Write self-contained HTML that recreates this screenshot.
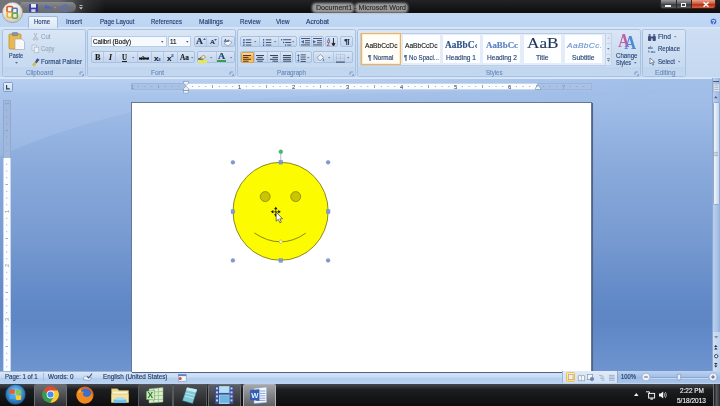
<!DOCTYPE html>
<html>
<head>
<meta charset="utf-8">
<title>Document1 - Microsoft Word</title>
<style>
html,body{margin:0;padding:0;}
body{width:720px;height:406px;overflow:hidden;position:relative;background:#000;font-family:"Liberation Sans",sans-serif;}
#root{filter:blur(.55px);position:absolute;left:0;top:0;width:720px;height:406px;}
.abs{position:absolute;box-sizing:border-box;}
.t{-webkit-text-stroke:.14px currentColor;position:absolute;white-space:nowrap;line-height:1;transform-origin:0 0;display:block;}
svg{position:absolute;overflow:visible;}
svg text{font-family:"Liberation Sans",sans-serif;}

</style>
</head>
<body>
<div id="root">
<div class="abs " style="left:-10px;top:-10px;width:740px;height:23px;background:linear-gradient(#222326,#222326 43%,#0d0d0e);"></div>
<div class="abs " style="left:-10px;top:-10px;width:115px;height:23px;background:linear-gradient(90deg,rgba(122,123,126,.95),rgba(112,113,116,.9) 60%,rgba(70,70,72,.5) 82%,rgba(30,30,32,0) 100%);"></div>
<div class="abs " style="left:-10px;top:13px;width:740px;height:14px;background:linear-gradient(#c3d9f4,#bdd5f2);"></div>
<div class="abs " style="left:-10px;top:27px;width:740px;height:51px;background:linear-gradient(#cddef3,#c4d8f0);"></div>
<div class="abs " style="left:-10px;top:78px;width:740px;height:14.5px;background:linear-gradient(#b8cff0,#adc7ec);"></div>
<div class="abs " style="left:-10px;top:92px;width:740px;height:279.5px;background:linear-gradient(#a8c3ea,#9ebbe6 6%,#8aaadb 27%,#799cd2 50%,#6088c6 76%,#5e86c5 82%,#6e95cf);"></div>
<div class="abs " style="left:-10px;top:370.5px;width:740px;height:13px;background:linear-gradient(#dbe8f8,#c4d9f2 45%,#b4ceee 55%,#bcd3f0);border-top:1px solid #9db4d4;"></div>
<div class="abs " style="left:-10px;top:383.5px;width:740px;height:33px;background:linear-gradient(#45484d,#1d1e20 17%,#0c0c0d 70%);"></div>
<div class="abs " style="left:-10px;top:76.8px;width:740px;height:1.8px;background:linear-gradient(#d2e1f4,#dde9f8);"></div>
<div class="abs " style="left:-10px;top:27px;width:740px;height:3px;background:linear-gradient(#dbe7f7,rgba(219,231,247,0));"></div>
<div class="abs " style="left:330px;top:78.6px;width:400px;height:30px;background:linear-gradient(90deg,rgba(157,187,230,0),rgba(157,187,230,.8) 80%);-webkit-mask-image:linear-gradient(#000 45%,transparent);mask-image:linear-gradient(#000 45%,transparent);"></div>
<div class="abs " style="left:21px;top:1.5px;width:54.5px;height:10.5px;background:linear-gradient(#8e9094,#74767a 50%,#6a6c70);border-radius:0 6px 6px 0;opacity:.9;"></div>
<svg style="left:2px;top:2px" width="21" height="21" viewBox="0 0 21 21"><defs><radialGradient id="ob" cx=".45" cy=".35" r=".75"><stop offset="0" stop-color="#ffffff"/><stop offset=".55" stop-color="#e8e4dc"/><stop offset="1" stop-color="#b9b5ad"/></radialGradient></defs>
<circle cx="10.5" cy="10.5" r="10.2" fill="url(#ob)" stroke="#8c8f96" stroke-width=".6"/>
<rect x="5" y="4.5" width="5.5" height="5.5" rx="1" fill="none" stroke="#d8542a" stroke-width="1.6"/>
<rect x="10.2" y="6.2" width="5" height="5" rx="1" fill="none" stroke="#4a78c0" stroke-width="1.5"/>
<rect x="5.2" y="10.2" width="5" height="5.3" rx="1" fill="none" stroke="#f0b02a" stroke-width="1.6"/>
<rect x="10.4" y="11.2" width="5" height="5" rx="1" fill="none" stroke="#6aa83a" stroke-width="1.6"/></svg>
<svg style="left:28.5px;top:3.5px" width="9" height="8" viewBox="0 0 9 8"><rect x="0" y="0" width="9" height="8" rx=".8" fill="#3c3fa0"/><rect x="2" y="0" width="5" height="3.6" fill="#e8ecff"/><rect x="2.3" y="5.2" width="4.2" height="2.8" fill="#c9cde8"/></svg>
<svg style="left:42.5px;top:4px" width="10" height="7" viewBox="0 0 10 7"><path d="M1 3.2 L4 .6 V2.2 C7.5 2 9.2 3.8 8.6 6.6 C8 4.6 6.6 4 4 4.2 V5.8 Z" fill="#4a63c8"/></svg>
<svg style="left:54.3px;top:6.7px" width="2.4" height="1.6" viewBox="0 0 2.4 1.6"><path d="M0 0H2.4L1.2 1.6Z" fill="#8f96b8"/></svg>
<svg style="left:60.5px;top:3.5px" width="8" height="8" viewBox="0 0 8 8"><path d="M6.8 2.2 A3.3 3.3 0 1 0 7.4 5.4" fill="none" stroke="#5a6fb8" stroke-width="1.5"/><path d="M5 .4 L8 2.6 L5 3.8Z" fill="#5a6fb8"/></svg>
<svg style="left:78.5px;top:4.5px" width="4" height="5" viewBox="0 0 4 5"><rect x=".5" y="0" width="3" height=".9" fill="#c8c8c8"/><path d="M0 2.2H4L2 4.4Z" fill="#c8c8c8"/></svg>
<div class="abs " style="left:312px;top:2.5px;width:42px;height:10px;background:rgba(166,166,166,.92);border-radius:4px;filter:blur(1.3px);"></div>
<div class="abs " style="left:355px;top:2.5px;width:53px;height:10px;background:rgba(166,166,166,.92);border-radius:4px;filter:blur(1.3px);"></div>
<span class="t" style="left:316px;top:4.17px;font-size:7.6px;color:#2a2a2a;transform:scaleX(0.932);">Document1 - Microsoft Word</span>
<div class="abs " style="left:660px;top:0px;width:32px;height:9px;background:linear-gradient(#9b9da1,#5b5d61 45%,#3c3d40 55%,#56585c);border:1px solid #2a2a2b;border-top:0;border-radius:0 0 0 3px;"></div>
<div class="abs " style="left:676px;top:0px;width:1px;height:8px;background:#2a2a2b;"></div>
<div class="abs " style="left:691px;top:0px;width:24.5px;height:9px;background:linear-gradient(#e5a28f,#cf5a3c 45%,#b8321a 55%,#d0603e);border:1px solid #4a1a10;border-top:0;border-radius:0 0 3px 0;"></div>
<div class="abs " style="left:665px;top:5px;width:6px;height:2px;background:#f4f4f4;"></div>
<div class="abs " style="left:681px;top:2.5px;width:5px;height:4.5px;border:1.3px solid #f4f4f4;"></div>
<svg style="left:702.5px;top:2px" width="6" height="5" viewBox="0 0 6 5"><path d="M.5 .3L5.5 4.7M5.5 .3L.5 4.7" stroke="#fff" stroke-width="1.5"/></svg>
<div class="abs " style="left:27.5px;top:15.5px;width:30px;height:12px;background:linear-gradient(#eef4fb,#dce8f6);border:1px solid #9fb9dc;border-bottom:0;border-radius:2px 2px 0 0;"></div>
<span class="t" style="left:34px;top:17.74px;font-size:7.4px;color:#1f3b6f;transform:scaleX(0.811);">Home</span>
<span class="t" style="left:66px;top:17.74px;font-size:7.4px;color:#1f3b6f;transform:scaleX(0.865);">Insert</span>
<span class="t" style="left:99.5px;top:17.74px;font-size:7.4px;color:#1f3b6f;transform:scaleX(0.830);">Page Layout</span>
<span class="t" style="left:151px;top:17.74px;font-size:7.4px;color:#1f3b6f;transform:scaleX(0.819);">References</span>
<span class="t" style="left:199px;top:17.74px;font-size:7.4px;color:#1f3b6f;transform:scaleX(0.884);">Mailings</span>
<span class="t" style="left:239.5px;top:17.74px;font-size:7.4px;color:#1f3b6f;transform:scaleX(0.845);">Review</span>
<span class="t" style="left:276px;top:17.74px;font-size:7.4px;color:#1f3b6f;transform:scaleX(0.849);">View</span>
<span class="t" style="left:306px;top:17.74px;font-size:7.4px;color:#1f3b6f;transform:scaleX(0.902);">Acrobat</span>
<svg style="left:710px;top:18px" width="7" height="7" viewBox="0 0 7 7"><circle cx="3.5" cy="3.5" r="3.3" fill="#3d6fcf" stroke="#e8f0ff" stroke-width=".6"/><text x="3.5" y="5.6" font-size="5.5" font-weight="bold" fill="#fff" text-anchor="middle">?</text></svg>
<div class="abs " style="left:2px;top:29px;width:84px;height:47.5px;border:1px solid #a9c2e2;border-radius:2.5px;background:linear-gradient(#d9e6f6,#cadcf1 60%,#c6d9f0);"></div>
<div class="abs " style="left:3px;top:66.5px;width:82px;height:9.5px;background:linear-gradient(#bfd4ee,#c4d8f0);border-radius:0 0 2px 2px;"></div>
<span class="t" style="left:26px;top:69.07px;font-size:7px;color:#6a8bb8;transform:scaleX(0.901);">Clipboard</span>
<svg style="left:80px;top:71.5px" width="4" height="4" viewBox="0 0 4 4"><path d="M0 3V0H3" fill="none" stroke="#6f8fbd" stroke-width=".8"/><path d="M1.6 3.8H3.8V1.6Z" fill="#6f8fbd"/></svg>
<div class="abs " style="left:87px;top:29px;width:149px;height:47.5px;border:1px solid #a9c2e2;border-radius:2.5px;background:linear-gradient(#d9e6f6,#cadcf1 60%,#c6d9f0);"></div>
<div class="abs " style="left:88px;top:66.5px;width:147px;height:9.5px;background:linear-gradient(#bfd4ee,#c4d8f0);border-radius:0 0 2px 2px;"></div>
<span class="t" style="left:151px;top:69.07px;font-size:7px;color:#6a8bb8;transform:scaleX(0.928);">Font</span>
<svg style="left:230px;top:71.5px" width="4" height="4" viewBox="0 0 4 4"><path d="M0 3V0H3" fill="none" stroke="#6f8fbd" stroke-width=".8"/><path d="M1.6 3.8H3.8V1.6Z" fill="#6f8fbd"/></svg>
<div class="abs " style="left:237px;top:29px;width:119px;height:47.5px;border:1px solid #a9c2e2;border-radius:2.5px;background:linear-gradient(#d9e6f6,#cadcf1 60%,#c6d9f0);"></div>
<div class="abs " style="left:238px;top:66.5px;width:117px;height:9.5px;background:linear-gradient(#bfd4ee,#c4d8f0);border-radius:0 0 2px 2px;"></div>
<span class="t" style="left:277px;top:69.07px;font-size:7px;color:#6a8bb8;transform:scaleX(0.887);">Paragraph</span>
<svg style="left:350px;top:71.5px" width="4" height="4" viewBox="0 0 4 4"><path d="M0 3V0H3" fill="none" stroke="#6f8fbd" stroke-width=".8"/><path d="M1.6 3.8H3.8V1.6Z" fill="#6f8fbd"/></svg>
<div class="abs " style="left:357px;top:29px;width:284px;height:47.5px;border:1px solid #a9c2e2;border-radius:2.5px;background:linear-gradient(#d9e6f6,#cadcf1 60%,#c6d9f0);"></div>
<div class="abs " style="left:358px;top:66.5px;width:282px;height:9.5px;background:linear-gradient(#bfd4ee,#c4d8f0);border-radius:0 0 2px 2px;"></div>
<span class="t" style="left:486px;top:69.07px;font-size:7px;color:#6a8bb8;transform:scaleX(0.866);">Styles</span>
<svg style="left:635px;top:71.5px" width="4" height="4" viewBox="0 0 4 4"><path d="M0 3V0H3" fill="none" stroke="#6f8fbd" stroke-width=".8"/><path d="M1.6 3.8H3.8V1.6Z" fill="#6f8fbd"/></svg>
<div class="abs " style="left:642px;top:29px;width:44px;height:47.5px;border:1px solid #a9c2e2;border-radius:2.5px;background:linear-gradient(#d9e6f6,#cadcf1 60%,#c6d9f0);"></div>
<div class="abs " style="left:643px;top:66.5px;width:42px;height:9.5px;background:linear-gradient(#bfd4ee,#c4d8f0);border-radius:0 0 2px 2px;"></div>
<span class="t" style="left:654.5px;top:69.07px;font-size:7px;color:#6a8bb8;transform:scaleX(0.958);">Editing</span>
<svg style="left:9px;top:32px" width="16" height="18" viewBox="0 0 16 18"><rect x="0" y="2" width="12" height="15" rx="1" fill="#e9b94e" stroke="#b8862a" stroke-width=".7"/>
<rect x="3.2" y=".6" width="5.6" height="3" rx=".8" fill="#8d97a8" stroke="#5f6b80" stroke-width=".5"/>
<path d="M6 7H13L15.5 9.5V17.5H6Z" fill="#f7f8fb" stroke="#9aa5b8" stroke-width=".6"/></svg>
<span class="t" style="left:9px;top:52.07px;font-size:7px;color:#294574;transform:scaleX(0.782);">Paste</span>
<svg style="left:14.5px;top:61.6px" width="3" height="1.8" viewBox="0 0 3 1.8"><path d="M0 0H3L1.5 1.8Z" fill="#5a6f94"/></svg>
<svg style="left:32.5px;top:33px" width="5" height="7.5" viewBox="0 0 5 7.5"><path d="M1 0L3.6 5M4 0L1.4 5" stroke="#aab4c4" stroke-width=".9" fill="none"/><circle cx="1.1" cy="6.2" r="1" fill="none" stroke="#aab4c4" stroke-width=".8"/><circle cx="3.9" cy="6.2" r="1" fill="none" stroke="#aab4c4" stroke-width=".8"/></svg>
<span class="t" style="left:41px;top:33.27px;font-size:7px;color:#9aa7ba;transform:scaleX(0.872);">Cut</span>
<svg style="left:31.5px;top:45px" width="7" height="8" viewBox="0 0 7 8"><rect x="0" y="0" width="4.5" height="5.5" fill="#e6ebf3" stroke="#aeb9ca" stroke-width=".7"/><rect x="2.3" y="2.2" width="4.5" height="5.5" fill="#eef2f8" stroke="#aeb9ca" stroke-width=".7"/></svg>
<span class="t" style="left:41px;top:45.27px;font-size:7px;color:#9aa7ba;transform:scaleX(0.826);">Copy</span>
<svg style="left:31.5px;top:57.5px" width="8" height="8" viewBox="0 0 8 8"><path d="M5.2 .3L7.6 1.8L4.4 5.2L2.8 4.2Z" fill="#3c4f8a"/><path d="M2.8 4.2L4.4 5.2L2.6 7.8Q.8 8 .6 6.6Z" fill="#e8c23a" stroke="#b8922a" stroke-width=".4"/></svg>
<span class="t" style="left:41px;top:58.07px;font-size:7px;color:#294574;transform:scaleX(0.886);">Format Painter</span>
<div class="abs " style="left:90.5px;top:36px;width:76px;height:10.8px;background:#f6f9fd;border:1px solid #b9cce6;"></div>
<span class="t" style="left:93px;top:38.07px;font-size:7px;color:#111;transform:scaleX(0.896);">Calibri (Body)</span>
<svg style="left:161.2px;top:40.949999999999996px" width="2.6" height="1.7" viewBox="0 0 2.6 1.7"><path d="M0 0H2.6L1.3 1.7Z" fill="#4a5f86"/></svg>
<div class="abs " style="left:167.5px;top:36px;width:23.5px;height:10.8px;background:#f6f9fd;border:1px solid #b9cce6;"></div>
<span class="t" style="left:169.5px;top:38.07px;font-size:7px;color:#111;transform:scaleX(0.894);">11</span>
<svg style="left:185.7px;top:40.949999999999996px" width="2.6" height="1.7" viewBox="0 0 2.6 1.7"><path d="M0 0H2.6L1.3 1.7Z" fill="#4a5f86"/></svg>
<div class="abs " style="left:194px;top:36px;width:24.5px;height:10.799999999999997px;border:1px solid #a9c0df;border-radius:2px;background:linear-gradient(#dbe7f6,#cbdcf1 50%,#c2d5ee);"></div>
<div class="abs " style="left:206px;top:37px;width:1px;height:8.799999999999997px;background:#b3c8e4;"></div>
<div class="abs " style="left:221px;top:36px;width:14px;height:10.799999999999997px;border:1px solid #a9c0df;border-radius:2px;background:linear-gradient(#dbe7f6,#cbdcf1 50%,#c2d5ee);"></div>
<span class="t" style="left:196px;top:36.96px;font-size:9px;color:#26324a;transform:scaleX(1.077);font-weight:bold;font-family:'Liberation Serif',serif;">A</span>
<svg style="left:203px;top:38px" width="3" height="2" viewBox="0 0 3 2"><path d="M0 2L1.5 0L3 2Z" fill="#3a62b0"/></svg>
<span class="t" style="left:209.5px;top:38.64px;font-size:7px;color:#26324a;transform:scaleX(0.989);font-weight:bold;font-family:'Liberation Serif',serif;">A</span>
<svg style="left:214.3px;top:38.5px" width="3" height="2" viewBox="0 0 3 2"><path d="M0 0L1.5 2L3 0Z" fill="#3a62b0"/></svg>
<svg style="left:223px;top:37.5px" width="10" height="8" viewBox="0 0 10 8"><path d="M1 5.5L5.5 2L9 4.5L5 8Z" fill="#f3f5f9" stroke="#6f7f9a" stroke-width=".6"/><text x="1" y="3.6" font-size="4" font-weight="bold" fill="#3a4a6a">Aa</text></svg>
<div class="abs " style="left:90.5px;top:51.2px;width:104.5px;height:12.099999999999994px;border:1px solid #a9c0df;border-radius:2px;background:linear-gradient(#dbe7f6,#cbdcf1 50%,#c2d5ee);"></div>
<div class="abs " style="left:102.5px;top:52.2px;width:1px;height:10.099999999999994px;background:#b3c8e4;"></div>
<div class="abs " style="left:115px;top:52.2px;width:1px;height:10.099999999999994px;background:#b3c8e4;"></div>
<div class="abs " style="left:136.5px;top:52.2px;width:1px;height:10.099999999999994px;background:#b3c8e4;"></div>
<div class="abs " style="left:150.5px;top:52.2px;width:1px;height:10.099999999999994px;background:#b3c8e4;"></div>
<div class="abs " style="left:163px;top:52.2px;width:1px;height:10.099999999999994px;background:#b3c8e4;"></div>
<div class="abs " style="left:176.5px;top:52.2px;width:1px;height:10.099999999999994px;background:#b3c8e4;"></div>
<span class="t" style="left:95px;top:54.10px;font-size:8px;color:#1a1a1a;transform:scaleX(1.031);font-weight:bold;font-family:'Liberation Serif',serif;">B</span>
<span class="t" style="left:108.5px;top:54.10px;font-size:8px;color:#1a1a1a;transform:scaleX(0.964);font-weight:bold;font-style:italic;font-family:'Liberation Serif',serif;">I</span>
<span class="t" style="left:121.5px;top:53.93px;font-size:7.6px;color:#1a1a1a;transform:scaleX(0.911);font-weight:bold;font-family:'Liberation Serif',serif;text-decoration:underline;">U</span>
<svg style="left:131.8px;top:57.2px" width="2.4" height="1.6" viewBox="0 0 2.4 1.6"><path d="M0 0H2.4L1.2 1.6Z" fill="#6a7f9f"/></svg>
<span class="t" style="left:139px;top:55.14px;font-size:6.4px;color:#1a1a1a;transform:scaleX(1.042);font-weight:bold;font-family:'Liberation Serif',serif;text-decoration:line-through;">abc</span>
<span class="t" style="left:153.5px;top:54.54px;font-size:7.4px;color:#1a1a1a;transform:scaleX(1.093);font-weight:bold;">x</span>
<span class="t" style="left:158.3px;top:58.48px;font-size:4.4px;color:#3a62b0;transform:scaleX(1.103);font-weight:bold;">2</span>
<span class="t" style="left:166.5px;top:54.54px;font-size:7.4px;color:#1a1a1a;transform:scaleX(1.093);font-weight:bold;">x</span>
<span class="t" style="left:171.3px;top:53.88px;font-size:4.4px;color:#3a62b0;transform:scaleX(1.103);font-weight:bold;">2</span>
<span class="t" style="left:180px;top:54.43px;font-size:7.6px;color:#1a1a1a;transform:scaleX(0.969);font-weight:bold;font-family:'Liberation Serif',serif;">Aa</span>
<svg style="left:190.8px;top:57.2px" width="2.4" height="1.6" viewBox="0 0 2.4 1.6"><path d="M0 0H2.4L1.2 1.6Z" fill="#6a7f9f"/></svg>
<div class="abs " style="left:196.5px;top:51.2px;width:38.5px;height:12.099999999999994px;border:1px solid #a9c0df;border-radius:2px;background:linear-gradient(#dbe7f6,#cbdcf1 50%,#c2d5ee);"></div>
<div class="abs " style="left:215.5px;top:52.2px;width:1px;height:10.099999999999994px;background:#b3c8e4;"></div>
<svg style="left:198px;top:53.5px" width="9" height="9" viewBox="0 0 9 9"><path d="M2 4.5L5.5 1L7.5 3L4 6.5Z" fill="#f6e9a0" stroke="#5a5a40" stroke-width=".5"/><text x="0" y="5.6" font-size="4" font-weight="bold" fill="#333">ab</text><rect x="0" y="6.6" width="9" height="2.2" fill="#f7ef1a"/></svg>
<svg style="left:210.3px;top:57.2px" width="2.4" height="1.6" viewBox="0 0 2.4 1.6"><path d="M0 0H2.4L1.2 1.6Z" fill="#6a7f9f"/></svg>
<span class="t" style="left:218.2px;top:52.20px;font-size:8.6px;color:#24426e;transform:scaleX(1.159);font-weight:bold;font-family:'Liberation Serif',serif;">A</span>
<div class="abs " style="left:216.8px;top:59.8px;width:9.4px;height:2.2px;background:#33a04e;"></div>
<svg style="left:229.8px;top:57.2px" width="2.4" height="1.6" viewBox="0 0 2.4 1.6"><path d="M0 0H2.4L1.2 1.6Z" fill="#6a7f9f"/></svg>
<div class="abs " style="left:240px;top:36px;width:57px;height:10.799999999999997px;border:1px solid #a9c0df;border-radius:2px;background:linear-gradient(#dbe7f6,#cbdcf1 50%,#c2d5ee);"></div>
<div class="abs " style="left:258.5px;top:37px;width:1px;height:8.799999999999997px;background:#b3c8e4;"></div>
<div class="abs " style="left:278px;top:37px;width:1px;height:8.799999999999997px;background:#b3c8e4;"></div>
<svg style="left:243px;top:38.5px" width="8.5" height="7" viewBox="0 0 8.5 7"><circle cx=".9" cy=".9" r=".9" fill="#3a62b0"/><circle cx=".9" cy="3.5" r=".9" fill="#3a62b0"/><circle cx=".9" cy="6.1" r=".9" fill="#3a62b0"/><rect x="2.8" y=".4" width="5.5" height=".9" fill="#3a4660"/><rect x="2.8" y="3" width="5.5" height=".9" fill="#3a4660"/><rect x="2.8" y="5.6" width="5.5" height=".9" fill="#3a4660"/></svg>
<svg style="left:253.8px;top:41.0px" width="2.4" height="1.6" viewBox="0 0 2.4 1.6"><path d="M0 0H2.4L1.2 1.6Z" fill="#6a7f9f"/></svg>
<svg style="left:262.5px;top:38.5px" width="8.5" height="7" viewBox="0 0 8.5 7"><rect x="0" y="0" width="1.2" height="1.6" fill="#3a62b0"/><rect x="0" y="2.7" width="1.2" height="1.6" fill="#3a62b0"/><rect x="0" y="5.4" width="1.2" height="1.6" fill="#3a62b0"/><rect x="2.8" y=".4" width="5.5" height=".9" fill="#3a4660"/><rect x="2.8" y="3" width="5.5" height=".9" fill="#3a4660"/><rect x="2.8" y="5.6" width="5.5" height=".9" fill="#3a4660"/></svg>
<svg style="left:273.8px;top:41.0px" width="2.4" height="1.6" viewBox="0 0 2.4 1.6"><path d="M0 0H2.4L1.2 1.6Z" fill="#6a7f9f"/></svg>
<svg style="left:280.5px;top:38.5px" width="10.5" height="7" viewBox="0 0 10.5 7"><rect x="0" y="0" width="1.2" height="1.4" fill="#3a62b0"/><rect x="2" y="2.7" width="1.2" height="1.4" fill="#3a62b0"/><rect x="4" y="5.4" width="1.2" height="1.4" fill="#3a62b0"/><rect x="2.2" y=".3" width="8" height=".9" fill="#3a4660"/><rect x="4.2" y="3" width="6" height=".9" fill="#3a4660"/><rect x="6.2" y="5.6" width="4" height=".9" fill="#3a4660"/></svg>
<svg style="left:292.3px;top:41.0px" width="2.4" height="1.6" viewBox="0 0 2.4 1.6"><path d="M0 0H2.4L1.2 1.6Z" fill="#6a7f9f"/></svg>
<div class="abs " style="left:298.5px;top:36px;width:25.0px;height:10.799999999999997px;border:1px solid #a9c0df;border-radius:2px;background:linear-gradient(#dbe7f6,#cbdcf1 50%,#c2d5ee);"></div>
<div class="abs " style="left:310.5px;top:37px;width:1px;height:8.799999999999997px;background:#b3c8e4;"></div>
<svg style="left:300.5px;top:38.3px" width="9" height="7.4" viewBox="0 0 9 7.4"><rect x="0" y="0" width="9" height=".9" fill="#3a4660"/><rect x="4" y="2.2" width="5" height=".9" fill="#3a4660"/><rect x="4" y="4.4" width="5" height=".9" fill="#3a4660"/><rect x="0" y="6.5" width="9" height=".9" fill="#3a4660"/><path d="M3 2L0 3.7L3 5.4Z" fill="#3a62b0"/></svg>
<svg style="left:313px;top:38.3px" width="9" height="7.4" viewBox="0 0 9 7.4"><rect x="0" y="0" width="9" height=".9" fill="#3a4660"/><rect x="4" y="2.2" width="5" height=".9" fill="#3a4660"/><rect x="4" y="4.4" width="5" height=".9" fill="#3a4660"/><rect x="0" y="6.5" width="9" height=".9" fill="#3a4660"/><path d="M0 2L3 3.7L0 5.4Z" fill="#3a62b0"/></svg>
<div class="abs " style="left:325px;top:36px;width:13px;height:10.799999999999997px;border:1px solid #a9c0df;border-radius:2px;background:linear-gradient(#dbe7f6,#cbdcf1 50%,#c2d5ee);"></div>
<svg style="left:327px;top:37.8px" width="9" height="8.4" viewBox="0 0 9 8.4"><text x="0" y="3.8" font-size="4.6" font-weight="bold" fill="#3a62b0">A</text><text x="0" y="8.2" font-size="4.6" font-weight="bold" fill="#b0303a">Z</text><path d="M6.5 0V7M5 5.4L6.5 8L8 5.4Z" stroke="#222" stroke-width=".9" fill="#222"/></svg>
<div class="abs " style="left:339.5px;top:36px;width:13.0px;height:10.799999999999997px;border:1px solid #a9c0df;border-radius:2px;background:linear-gradient(#dbe7f6,#cbdcf1 50%,#c2d5ee);"></div>
<span class="t" style="left:344px;top:38.37px;font-size:7.6px;color:#26324a;transform:scaleX(1.419);font-weight:bold;">¶</span>
<div class="abs " style="left:240px;top:51.2px;width:53px;height:12.099999999999994px;border:1px solid #a9c0df;border-radius:2px;background:linear-gradient(#dbe7f6,#cbdcf1 50%,#c2d5ee);"></div>
<div class="abs " style="left:253.5px;top:52.2px;width:1px;height:10.099999999999994px;background:#b3c8e4;"></div>
<div class="abs " style="left:266.5px;top:52.2px;width:1px;height:10.099999999999994px;background:#b3c8e4;"></div>
<div class="abs " style="left:279.5px;top:52.2px;width:1px;height:10.099999999999994px;background:#b3c8e4;"></div>
<div class="abs " style="left:240.5px;top:51.7px;width:13px;height:11.1px;background:linear-gradient(#fbd9a0,#f5b04c 50%,#f7c66f);border:1px solid #d8a050;border-radius:2px 0 0 2px;"></div>
<svg style="left:243px;top:54.8px" width="8" height="7.6" viewBox="0 0 8 7.6"><rect x="0" y="0.0" width="8" height="1" fill="#4a3a20"/><rect x="0" y="1.9" width="5.5" height="1" fill="#4a3a20"/><rect x="0" y="3.8" width="8" height="1" fill="#4a3a20"/><rect x="0" y="5.699999999999999" width="5.5" height="1" fill="#4a3a20"/></svg>
<svg style="left:256px;top:54.8px" width="8" height="7.6" viewBox="0 0 8 7.6"><rect x="0.0" y="0.0" width="8" height="1" fill="#3a4660"/><rect x="1.25" y="1.9" width="5.5" height="1" fill="#3a4660"/><rect x="0.0" y="3.8" width="8" height="1" fill="#3a4660"/><rect x="1.25" y="5.699999999999999" width="5.5" height="1" fill="#3a4660"/></svg>
<svg style="left:269.5px;top:54.8px" width="8" height="7.6" viewBox="0 0 8 7.6"><rect x="0" y="0.0" width="8" height="1" fill="#3a4660"/><rect x="2.5" y="1.9" width="5.5" height="1" fill="#3a4660"/><rect x="0" y="3.8" width="8" height="1" fill="#3a4660"/><rect x="2.5" y="5.699999999999999" width="5.5" height="1" fill="#3a4660"/></svg>
<svg style="left:282.5px;top:54.8px" width="8" height="7.6" viewBox="0 0 8 7.6"><rect x="0" y="0.0" width="8" height="1" fill="#3a4660"/><rect x="0" y="1.9" width="8" height="1" fill="#3a4660"/><rect x="0" y="3.8" width="8" height="1" fill="#3a4660"/><rect x="0" y="5.699999999999999" width="8" height="1" fill="#3a4660"/></svg>
<div class="abs " style="left:294.5px;top:51.2px;width:17.0px;height:12.099999999999994px;border:1px solid #a9c0df;border-radius:2px;background:linear-gradient(#dbe7f6,#cbdcf1 50%,#c2d5ee);"></div>
<svg style="left:296.5px;top:54px" width="9" height="8" viewBox="0 0 9 8"><path d="M1.3 0L0 2H2.6ZM1.3 8L0 6H2.6Z" fill="#3a62b0"/><rect x="1" y="1.5" width=".7" height="5" fill="#3a62b0"/><rect x="3.6" y=".4" width="5.2" height=".9" fill="#3a4660"/><rect x="3.6" y="2.6" width="5.2" height=".9" fill="#3a4660"/><rect x="3.6" y="4.8" width="5.2" height=".9" fill="#3a4660"/><rect x="3.6" y="7" width="5.2" height=".9" fill="#3a4660"/></svg>
<svg style="left:306.8px;top:57.2px" width="2.4" height="1.6" viewBox="0 0 2.4 1.6"><path d="M0 0H2.4L1.2 1.6Z" fill="#6a7f9f"/></svg>
<div class="abs " style="left:313px;top:51.2px;width:39.5px;height:12.099999999999994px;border:1px solid #a9c0df;border-radius:2px;background:linear-gradient(#dbe7f6,#cbdcf1 50%,#c2d5ee);"></div>
<div class="abs " style="left:332.5px;top:52.2px;width:1px;height:10.099999999999994px;background:#b3c8e4;"></div>
<svg style="left:316px;top:54px" width="9" height="8" viewBox="0 0 9 8"><path d="M1 3.5L4.5 .5L7.5 3.5L4 7Z" fill="#eef1f6" stroke="#6a7588" stroke-width=".6"/><path d="M7.2 4.2Q9 6.5 7.8 7.4Q6.6 6.5 7.2 4.2Z" fill="#3a62b0"/><rect x="0" y="7" width="6" height="1" fill="#dfe4ec"/></svg>
<svg style="left:328.3px;top:57.2px" width="2.4" height="1.6" viewBox="0 0 2.4 1.6"><path d="M0 0H2.4L1.2 1.6Z" fill="#6a7f9f"/></svg>
<svg style="left:335.5px;top:54px" width="9" height="8.5" viewBox="0 0 9 8.5"><rect x=".4" y=".4" width="8" height="7.6" fill="none" stroke="#98a6bd" stroke-width=".7" stroke-dasharray="1 .8"/><path d="M4.4 .4V8M.4 4.2H8.4" stroke="#98a6bd" stroke-width=".6" stroke-dasharray="1 .8"/><rect x="0" y="7.6" width="8.8" height="1" fill="#3a4660"/></svg>
<svg style="left:346.8px;top:57.2px" width="2.4" height="1.6" viewBox="0 0 2.4 1.6"><path d="M0 0H2.4L1.2 1.6Z" fill="#6a7f9f"/></svg>
<div class="abs " style="left:360px;top:32.5px;width:251.5px;height:33px;background:#e3ecf8;border:1px solid #bccee7;"></div>
<div class="abs " style="left:361px;top:33px;width:39.5px;height:31.5px;background:#fffdf6;border:1.2px solid #f0b35a;box-shadow:inset 0 0 0 .8px #fde9c0;"></div>
<div class="abs " style="left:402.5px;top:35px;width:37.0px;height:27.5px;background:#fdfeff;"></div>
<div class="abs " style="left:442.5px;top:35px;width:37.5px;height:27.5px;background:#fdfeff;"></div>
<div class="abs " style="left:482.5px;top:35px;width:37.5px;height:27.5px;background:#fdfeff;"></div>
<div class="abs " style="left:523.5px;top:35px;width:37.0px;height:27.5px;background:#fdfeff;"></div>
<div class="abs " style="left:564.5px;top:35px;width:37.0px;height:27.5px;background:#fdfeff;"></div>
<span class="t" style="left:364.5px;top:41.74px;font-size:7.4px;color:#1a1a1a;transform:scaleX(0.898);">AaBbCcDc</span>
<span class="t" style="left:405px;top:41.74px;font-size:7.4px;color:#1a1a1a;transform:scaleX(0.898);">AaBbCcDc</span>
<span class="t" style="left:445px;top:40.23px;font-size:10px;color:#2f4f86;transform:scaleX(0.928);font-weight:bold;font-family:'Liberation Serif',serif;">AaBbC‹</span>
<span class="t" style="left:486px;top:40.86px;font-size:9px;color:#5b7fc0;transform:scaleX(0.985);font-weight:bold;font-family:'Liberation Serif',serif;">AaBbCc</span>
<span class="t" style="left:527px;top:34.90px;font-size:15.4px;color:#1e3358;transform:scaleX(1.116);font-family:'Liberation Serif',serif;">AaB</span>
<span class="t" style="left:567px;top:41.74px;font-size:7.4px;color:#6e95cf;transform:scaleX(1.130);font-style:italic;letter-spacing:.3px;">AaBbCc.</span>
<span class="t" style="left:367.5px;top:54.64px;font-size:6.8px;color:#294574;transform:scaleX(0.929);">¶ Normal</span>
<span class="t" style="left:404px;top:54.64px;font-size:6.8px;color:#294574;transform:scaleX(0.902);">¶ No Spaci...</span>
<span class="t" style="left:446px;top:54.64px;font-size:6.8px;color:#294574;transform:scaleX(0.968);">Heading 1</span>
<span class="t" style="left:487px;top:54.64px;font-size:6.8px;color:#294574;transform:scaleX(0.968);">Heading 2</span>
<span class="t" style="left:536px;top:54.64px;font-size:6.8px;color:#294574;transform:scaleX(0.993);">Title</span>
<span class="t" style="left:572px;top:54.64px;font-size:6.8px;color:#294574;transform:scaleX(0.992);">Subtitle</span>
<div class="abs " style="left:604.5px;top:32.5px;width:7px;height:33px;background:linear-gradient(90deg,#e3ecf8,#d6e3f4);border:1px solid #c3d3ea;"></div>
<div class="abs " style="left:605px;top:43px;width:6px;height:1px;background:#c6d5eb;"></div>
<div class="abs " style="left:605px;top:54px;width:6px;height:1px;background:#c6d5eb;"></div>
<svg style="left:606.7px;top:36.8px" width="2.6" height="1.8" viewBox="0 0 2.6 1.8"><path d="M0 1.8L1.3 0L2.6 1.8Z" fill="#b7c4d8"/></svg>
<svg style="left:606.7px;top:47.6px" width="2.6" height="1.8" viewBox="0 0 2.6 1.8"><path d="M0 0H2.6L1.3 1.8Z" fill="#6a7f9f"/></svg>
<svg style="left:606.5px;top:57.5px" width="3" height="4" viewBox="0 0 3 4"><rect x="0" y="0" width="3" height=".8" fill="#6a7f9f"/><path d="M0 1.8H3L1.5 3.8Z" fill="#6a7f9f"/></svg>
<svg style="left:617px;top:32px" width="20" height="18" viewBox="0 0 20 18"><text x="1.2" y="15" font-size="18" font-weight="bold" fill="#c45aa6" style="font-family:'Liberation Serif',serif" textLength="11" lengthAdjust="spacingAndGlyphs">A</text><text x="7.4" y="17" font-size="18" font-weight="bold" fill="#4d8ad4" style="font-family:'Liberation Serif',serif" textLength="11.6" lengthAdjust="spacingAndGlyphs">A</text></svg>
<span class="t" style="left:616px;top:52.07px;font-size:7px;color:#294574;transform:scaleX(0.877);">Change</span>
<span class="t" style="left:616px;top:59.07px;font-size:7px;color:#294574;transform:scaleX(0.787);">Styles</span>
<svg style="left:633.7px;top:61.65px" width="2.6" height="1.7" viewBox="0 0 2.6 1.7"><path d="M0 0H2.6L1.3 1.7Z" fill="#5a6f94"/></svg>
<svg style="left:647.5px;top:33.5px" width="8" height="7" viewBox="0 0 8 7"><rect x="0" y="2" width="3.2" height="5" rx=".8" fill="#3f4f7a"/><rect x="4.6" y="2" width="3.2" height="5" rx=".8" fill="#3f4f7a"/><rect x="2.4" y="2.6" width="3" height="1.8" fill="#3f4f7a"/><rect x=".6" y="0" width="2" height="2.4" fill="#5f74a8"/><rect x="5.2" y="0" width="2" height="2.4" fill="#5f74a8"/></svg>
<span class="t" style="left:658px;top:33.27px;font-size:7px;color:#294574;transform:scaleX(0.955);">Find</span>
<svg style="left:674.3px;top:36.0px" width="2.4" height="1.6" viewBox="0 0 2.4 1.6"><path d="M0 0H2.4L1.2 1.6Z" fill="#6a7f9f"/></svg>
<svg style="left:647.5px;top:46px" width="8" height="7" viewBox="0 0 8 7"><text x="0" y="3.4" font-size="4" font-weight="bold" fill="#3a4660">ab</text><text x="3" y="7" font-size="4" font-weight="bold" fill="#3a62b0">ac</text><path d="M.5 4.4V6H2.4" fill="none" stroke="#3a62b0" stroke-width=".6"/></svg>
<span class="t" style="left:658px;top:45.27px;font-size:7px;color:#294574;transform:scaleX(0.857);">Replace</span>
<svg style="left:649px;top:58px" width="6" height="7.5" viewBox="0 0 6 7.5"><path d="M1 0V6L2.6 4.6L3.8 7.2L4.8 6.8L3.6 4.2H5.6Z" fill="#fff" stroke="#3a4660" stroke-width=".6"/></svg>
<span class="t" style="left:658px;top:58.07px;font-size:7px;color:#294574;transform:scaleX(0.874);">Select</span>
<svg style="left:678.3px;top:60.7px" width="2.4" height="1.6" viewBox="0 0 2.4 1.6"><path d="M0 0H2.4L1.2 1.6Z" fill="#6a7f9f"/></svg>
<div class="abs " style="left:3px;top:82px;width:9.5px;height:9.5px;background:linear-gradient(#e6eefa,#c9dbf2);border:1px solid #7f9cc6;border-radius:1.5px;"></div>
<svg style="left:6px;top:84.5px" width="4" height="4.5" viewBox="0 0 4 4.5"><path d="M.6 0V3.9H3.8" fill="none" stroke="#2a3a5a" stroke-width="1.1"/></svg>
<div class="abs " style="left:131px;top:83px;width:460.5px;height:7px;background:#a9c1e5;border:1px solid #9cb5db;"></div>
<div class="abs " style="left:186px;top:83px;width:351px;height:7px;background:#fbfcfe;border-top:1px solid #c8d6ea;border-bottom:1px solid #c8d6ea;"></div>
<svg style="left:0px;top:0px" width="720" height="100" viewBox="0 0 720 100"><rect x="137.90" y="86" width=".8" height="1" fill="#7f99c2"/><rect x="144.65" y="86" width=".8" height="1" fill="#7f99c2"/><rect x="151.40" y="86" width=".8" height="1" fill="#7f99c2"/><rect x="158.15" y="85" width=".8" height="3" fill="#7f99c2"/><rect x="164.90" y="86" width=".8" height="1" fill="#7f99c2"/><rect x="171.65" y="86" width=".8" height="1" fill="#7f99c2"/><rect x="178.40" y="86" width=".8" height="1" fill="#7f99c2"/><rect x="191.90" y="86" width=".8" height="1" fill="#7d8fae"/><rect x="198.65" y="86" width=".8" height="1" fill="#7d8fae"/><rect x="205.40" y="86" width=".8" height="1" fill="#7d8fae"/><rect x="212.15" y="85" width=".8" height="3" fill="#7d8fae"/><rect x="218.90" y="86" width=".8" height="1" fill="#7d8fae"/><rect x="225.65" y="86" width=".8" height="1" fill="#7d8fae"/><rect x="232.40" y="86" width=".8" height="1" fill="#7d8fae"/><rect x="245.90" y="86" width=".8" height="1" fill="#7d8fae"/><rect x="252.65" y="86" width=".8" height="1" fill="#7d8fae"/><rect x="259.40" y="86" width=".8" height="1" fill="#7d8fae"/><rect x="266.15" y="85" width=".8" height="3" fill="#7d8fae"/><rect x="272.90" y="86" width=".8" height="1" fill="#7d8fae"/><rect x="279.65" y="86" width=".8" height="1" fill="#7d8fae"/><rect x="286.40" y="86" width=".8" height="1" fill="#7d8fae"/><rect x="299.90" y="86" width=".8" height="1" fill="#7d8fae"/><rect x="306.65" y="86" width=".8" height="1" fill="#7d8fae"/><rect x="313.40" y="86" width=".8" height="1" fill="#7d8fae"/><rect x="320.15" y="85" width=".8" height="3" fill="#7d8fae"/><rect x="326.90" y="86" width=".8" height="1" fill="#7d8fae"/><rect x="333.65" y="86" width=".8" height="1" fill="#7d8fae"/><rect x="340.40" y="86" width=".8" height="1" fill="#7d8fae"/><rect x="353.90" y="86" width=".8" height="1" fill="#7d8fae"/><rect x="360.65" y="86" width=".8" height="1" fill="#7d8fae"/><rect x="367.40" y="86" width=".8" height="1" fill="#7d8fae"/><rect x="374.15" y="85" width=".8" height="3" fill="#7d8fae"/><rect x="380.90" y="86" width=".8" height="1" fill="#7d8fae"/><rect x="387.65" y="86" width=".8" height="1" fill="#7d8fae"/><rect x="394.40" y="86" width=".8" height="1" fill="#7d8fae"/><rect x="407.90" y="86" width=".8" height="1" fill="#7d8fae"/><rect x="414.65" y="86" width=".8" height="1" fill="#7d8fae"/><rect x="421.40" y="86" width=".8" height="1" fill="#7d8fae"/><rect x="428.15" y="85" width=".8" height="3" fill="#7d8fae"/><rect x="434.90" y="86" width=".8" height="1" fill="#7d8fae"/><rect x="441.65" y="86" width=".8" height="1" fill="#7d8fae"/><rect x="448.40" y="86" width=".8" height="1" fill="#7d8fae"/><rect x="461.90" y="86" width=".8" height="1" fill="#7d8fae"/><rect x="468.65" y="86" width=".8" height="1" fill="#7d8fae"/><rect x="475.40" y="86" width=".8" height="1" fill="#7d8fae"/><rect x="482.15" y="85" width=".8" height="3" fill="#7d8fae"/><rect x="488.90" y="86" width=".8" height="1" fill="#7d8fae"/><rect x="495.65" y="86" width=".8" height="1" fill="#7d8fae"/><rect x="502.40" y="86" width=".8" height="1" fill="#7d8fae"/><rect x="515.90" y="86" width=".8" height="1" fill="#7d8fae"/><rect x="522.65" y="86" width=".8" height="1" fill="#7d8fae"/><rect x="529.40" y="86" width=".8" height="1" fill="#7d8fae"/><rect x="536.15" y="85" width=".8" height="3" fill="#7d8fae"/><rect x="542.90" y="86" width=".8" height="1" fill="#7f99c2"/><rect x="549.65" y="86" width=".8" height="1" fill="#7f99c2"/><rect x="556.40" y="86" width=".8" height="1" fill="#7f99c2"/><rect x="569.90" y="86" width=".8" height="1" fill="#7f99c2"/><rect x="576.65" y="86" width=".8" height="1" fill="#7f99c2"/><rect x="583.40" y="86" width=".8" height="1" fill="#7f99c2"/></svg>
<span class="t" style="left:237.9px;top:83.72px;font-size:6px;color:#4f607f;transform:scaleX(0.959);">1</span>
<span class="t" style="left:291.9px;top:83.72px;font-size:6px;color:#4f607f;transform:scaleX(0.959);">2</span>
<span class="t" style="left:345.9px;top:83.72px;font-size:6px;color:#4f607f;transform:scaleX(0.959);">3</span>
<span class="t" style="left:399.9px;top:83.72px;font-size:6px;color:#4f607f;transform:scaleX(0.959);">4</span>
<span class="t" style="left:453.9px;top:83.72px;font-size:6px;color:#4f607f;transform:scaleX(0.959);">5</span>
<span class="t" style="left:507.9px;top:83.72px;font-size:6px;color:#4f607f;transform:scaleX(0.959);">6</span>
<span class="t" style="left:131.4px;top:83.72px;font-size:6px;color:#7f99c2;transform:scaleX(0.959);">1</span>
<span class="t" style="left:561.9px;top:83.72px;font-size:6px;color:#7f99c2;transform:scaleX(0.959);">7</span>
<svg style="left:182.5px;top:80.5px" width="6" height="13" viewBox="0 0 6 13"><path d="M.4 .4H5.6V2L3 4.6L.4 2Z" fill="#eef3fb" stroke="#6f86ab" stroke-width=".6"/><path d="M3 5.2L5.6 7.8V9.4H.4V7.8Z" fill="#eef3fb" stroke="#6f86ab" stroke-width=".6"/><rect x=".4" y="9.6" width="5.2" height="2.8" fill="#eef3fb" stroke="#6f86ab" stroke-width=".6"/></svg>
<svg style="left:534.5px;top:85px" width="6" height="5" viewBox="0 0 6 5"><path d="M3 .4L5.6 3V4.6H.4V3Z" fill="#eef3fb" stroke="#6f86ab" stroke-width=".6"/></svg>
<svg style="left:0px;top:92px" width="720" height="278" viewBox="0 0 720 278"><defs><linearGradient id="sw" x1="0" y1="0" x2="0" y2="1"><stop offset="0" stop-color="#adc7ec" stop-opacity=".6"/><stop offset=".3" stop-color="#a8c3ea" stop-opacity=".75"/><stop offset="1" stop-color="#a4c0e8" stop-opacity=".5"/></linearGradient></defs>
<path d="M0 0H420Q230 4 132 20Q56 38 0 64Z" fill="url(#sw)" opacity=".9"/></svg>
<div class="abs " style="left:3px;top:100px;width:7.5px;height:271px;background:#9fb8dc;border:1px solid #8fa9cf;border-bottom:0;"></div>
<div class="abs " style="left:3px;top:157.5px;width:7.5px;height:213.5px;background:#fbfcfe;border-left:1px solid #c8d6ea;border-right:1px solid #c8d6ea;"></div>
<svg style="left:0px;top:0px" width="20" height="406" viewBox="0 0 20 406"><text x="0" y="0" transform="translate(8.6 105.10) rotate(-90)" font-size="5.6" fill="#7f99c2">1</text><rect x="6.2" y="109.85" width="1" height=".8" fill="#7f99c2"/><rect x="6.2" y="116.60" width="1" height=".8" fill="#7f99c2"/><rect x="6.2" y="123.35" width="1" height=".8" fill="#7f99c2"/><rect x="5.5" y="130.10" width="2.4" height=".8" fill="#7f99c2"/><rect x="6.2" y="136.85" width="1" height=".8" fill="#7f99c2"/><rect x="6.2" y="143.60" width="1" height=".8" fill="#7f99c2"/><rect x="6.2" y="150.35" width="1" height=".8" fill="#7f99c2"/><rect x="6.2" y="163.85" width="1" height=".8" fill="#7d8fae"/><rect x="6.2" y="170.60" width="1" height=".8" fill="#7d8fae"/><rect x="6.2" y="177.35" width="1" height=".8" fill="#7d8fae"/><rect x="5.5" y="184.10" width="2.4" height=".8" fill="#7d8fae"/><rect x="6.2" y="190.85" width="1" height=".8" fill="#7d8fae"/><rect x="6.2" y="197.60" width="1" height=".8" fill="#7d8fae"/><rect x="6.2" y="204.35" width="1" height=".8" fill="#7d8fae"/><text x="0" y="0" transform="translate(8.6 213.10) rotate(-90)" font-size="5.6" fill="#7d8fae">1</text><rect x="6.2" y="217.85" width="1" height=".8" fill="#7d8fae"/><rect x="6.2" y="224.60" width="1" height=".8" fill="#7d8fae"/><rect x="6.2" y="231.35" width="1" height=".8" fill="#7d8fae"/><rect x="5.5" y="238.10" width="2.4" height=".8" fill="#7d8fae"/><rect x="6.2" y="244.85" width="1" height=".8" fill="#7d8fae"/><rect x="6.2" y="251.60" width="1" height=".8" fill="#7d8fae"/><rect x="6.2" y="258.35" width="1" height=".8" fill="#7d8fae"/><text x="0" y="0" transform="translate(8.6 267.10) rotate(-90)" font-size="5.6" fill="#7d8fae">2</text><rect x="6.2" y="271.85" width="1" height=".8" fill="#7d8fae"/><rect x="6.2" y="278.60" width="1" height=".8" fill="#7d8fae"/><rect x="6.2" y="285.35" width="1" height=".8" fill="#7d8fae"/><rect x="5.5" y="292.10" width="2.4" height=".8" fill="#7d8fae"/><rect x="6.2" y="298.85" width="1" height=".8" fill="#7d8fae"/><rect x="6.2" y="305.60" width="1" height=".8" fill="#7d8fae"/><rect x="6.2" y="312.35" width="1" height=".8" fill="#7d8fae"/><text x="0" y="0" transform="translate(8.6 321.10) rotate(-90)" font-size="5.6" fill="#7d8fae">3</text><rect x="6.2" y="325.85" width="1" height=".8" fill="#7d8fae"/><rect x="6.2" y="332.60" width="1" height=".8" fill="#7d8fae"/><rect x="6.2" y="339.35" width="1" height=".8" fill="#7d8fae"/><rect x="5.5" y="346.10" width="2.4" height=".8" fill="#7d8fae"/><rect x="6.2" y="352.85" width="1" height=".8" fill="#7d8fae"/><rect x="6.2" y="359.60" width="1" height=".8" fill="#7d8fae"/><rect x="6.2" y="366.35" width="1" height=".8" fill="#7d8fae"/></svg>
<div class="abs " style="left:131px;top:101.6px;width:460.8px;height:270px;background:#fff;border:.8px solid #66789a;border-bottom:0;box-shadow:.9px .6px .6px #50648a;"></div>
<div class="abs " style="left:711.5px;top:78px;width:8.5px;height:293px;background:linear-gradient(90deg,#b9cfee,#a9c3e8 60%,#94b0da);border-left:1px solid #8ea9d0;"></div>
<div class="abs " style="left:713px;top:80.5px;width:6px;height:1.2px;background:#4b5f86;"></div>
<svg style="left:712.5px;top:83px" width="7" height="9" viewBox="0 0 7 9"><rect x=".3" y=".3" width="6.4" height="8.4" rx="1" fill="#dfe8f5" stroke="#8a9fc2" stroke-width=".6"/><path d="M1.5 2H5.5M1.5 4.2H5.5M1.5 6.4H5.5" stroke="#8795ad" stroke-width=".7"/></svg>
<svg style="left:714px;top:96.3px" width="3.6" height="2.2" viewBox="0 0 3.6 2.2"><path d="M0 2.2L1.8 0L3.6 2.2Z" fill="#4b5f86"/></svg>
<div class="abs " style="left:712.5px;top:102px;width:7px;height:103px;background:linear-gradient(90deg,#f3f7fc,#dbe6f5 50%,#c3d4ec);border:1px solid #8fa9cf;border-radius:1.5px;"></div>
<svg style="left:714px;top:151.5px" width="4" height="4" viewBox="0 0 4 4"><path d="M0 .4H4M0 2H4M0 3.6H4" stroke="#7f95b8" stroke-width=".6"/></svg>
<div class="abs " style="left:712.5px;top:332px;width:7px;height:39px;background:linear-gradient(90deg,#d2e1f4,#bdd2ee);"></div>
<svg style="left:713.6px;top:335.8px" width="4.4" height="2.6" viewBox="0 0 4.4 2.6"><path d="M0 0H4.4L2.2 2.6Z" fill="#7e8fb0"/></svg>
<svg style="left:714px;top:344.5px" width="3.6" height="4.4" viewBox="0 0 3.6 4.4"><path d="M0 2L1.8 0L3.6 2ZM0 4.4L1.8 2.4L3.6 4.4Z" fill="#26324a"/></svg>
<svg style="left:713.8px;top:353.8px" width="4.4" height="4.4" viewBox="0 0 4.4 4.4"><circle cx="2.2" cy="2.2" r="1.7" fill="#e9eef6" stroke="#26324a" stroke-width=".9"/></svg>
<svg style="left:714px;top:362.8px" width="3.6" height="4.4" viewBox="0 0 3.6 4.4"><path d="M0 0L1.8 2L3.6 0ZM0 2.4L1.8 4.4L3.6 2.4Z" fill="#26324a"/></svg>
<svg style="left:220px;top:140px" width="120" height="130" viewBox="0 0 120 130"><ellipse cx="60.6" cy="71.3" rx="47.6" ry="49" fill="#fdfb00" stroke="#6f6a1a" stroke-width=".8"/>
<circle cx="45.2" cy="56.6" r="5" fill="#cbc500" stroke="#7d7814" stroke-width=".7"/>
<circle cx="75.7" cy="56.6" r="5" fill="#cbc500" stroke="#7d7814" stroke-width=".7"/>
<path d="M34.4 93 Q60.6 110.6 85.8 93.2" fill="none" stroke="#6f6a1a" stroke-width=".8"/>
<path d="M60.8 22.3V12" stroke="#9fb0d6" stroke-width=".9"/>
<circle cx="60.8" cy="11.7" r="1.9" fill="#3fc06a" stroke="#2c9a50" stroke-width=".4"/>
<g fill="#7f9bd0" stroke="#5f7fbf" stroke-width=".4">
<circle cx="12.9" cy="22.3" r="1.9"/><circle cx="108.1" cy="22.3" r="1.9"/><circle cx="12.9" cy="120.4" r="1.9"/><circle cx="108.1" cy="120.4" r="1.9"/>
<rect x="59" y="20.5" width="3.6" height="3.6"/><rect x="59" y="118.7" width="3.6" height="3.6"/><rect x="11.1" y="69.8" width="3.6" height="3.6"/><rect x="106.4" y="69.8" width="3.6" height="3.6"/>
</g>
<path d="M60.8 99.7L62.8 101.7L60.8 103.7L58.8 101.7Z" fill="#fffde0" stroke="#8a8420" stroke-width=".5"/>
<g stroke="#1a1a1a" stroke-width=".7" fill="#1a1a1a"><path d="M52.4 71.8H59.2M55.8 68.4V75.2" fill="none"/><path d="M55.8 66.8L54 69.3H57.6ZM55.8 76.8L54 74.3H57.6ZM50.8 71.8L53.3 70V73.6ZM60.8 71.8L58.3 70V73.6Z" stroke="none"/></g>
<path d="M56.2 72.2V81.2L58.3 79.3L59.9 82.8L61.3 82.2L59.8 78.8H62.6Z" fill="#fff" stroke="#222" stroke-width=".6"/></svg>
<span class="t" style="left:4.7px;top:374.01px;font-size:6.6px;color:#223a66;transform:scaleX(0.921);">Page: 1 of 1</span>
<div class="abs " style="left:42.5px;top:373px;width:1px;height:8px;background:#a3bbdc;"></div>
<span class="t" style="left:48.3px;top:374.01px;font-size:6.6px;color:#223a66;transform:scaleX(0.970);">Words: 0</span>
<svg style="left:83px;top:372.5px" width="10" height="8.5" viewBox="0 0 10 8.5"><path d="M.5 4.5L3 3L9 4.8L6 7.6L.5 6.6Z" fill="#f1f4f9" stroke="#7a8aa6" stroke-width=".6"/><path d="M4 3.4L5.6 5L9 .6" fill="none" stroke="#3c5a94" stroke-width="1.1"/></svg>
<span class="t" style="left:102.5px;top:374.01px;font-size:6.6px;color:#223a66;transform:scaleX(0.956);">English (United States)</span>
<svg style="left:177.5px;top:373.5px" width="8.5" height="7.5" viewBox="0 0 8.5 7.5"><rect x=".3" y=".3" width="7.9" height="6.9" fill="#f3f6fb" stroke="#7f95bd" stroke-width=".6"/><rect x=".3" y=".3" width="7.9" height="1.8" fill="#5f82c4"/><circle cx="2.2" cy="4.4" r="1.5" fill="#d04a3a"/></svg>
<div class="abs " style="left:561.5px;top:371px;width:55px;height:12px;background:linear-gradient(#e1ebf8,#cfdff3);border-left:1px solid #9db5d8;"></div>
<div class="abs " style="left:617px;top:371px;width:103px;height:12px;background:linear-gradient(#bcd2ef,#a5c1e8 45%,#9dbbe5 55%,#a9c5ea);border-left:1px solid #8fa9cf;"></div>
<div class="abs " style="left:565.8px;top:372.4px;width:9.6px;height:9.6px;background:linear-gradient(#fdf0c4,#fbdc8a);border:1px solid #eebf4e;border-radius:1.5px;"></div>
<svg style="left:567.9px;top:374.4px" width="6" height="6" viewBox="0 0 6 6"><rect x=".3" y=".3" width="4.8" height="5.4" fill="#f4efe0" stroke="#a79a74" stroke-width=".6"/></svg>
<svg style="left:577.5px;top:374.5px" width="7" height="6.5" viewBox="0 0 7 6.5"><path d="M.3 .8Q2 0 3.4 .8Q4.8 0 6.6 .8V6Q4.8 5.2 3.4 6Q2 5.2 .3 6Z" fill="#f3f6fb" stroke="#7587a8" stroke-width=".6"/><path d="M3.4 .8V6" stroke="#7587a8" stroke-width=".5"/></svg>
<svg style="left:587px;top:374.3px" width="7" height="7" viewBox="0 0 7 7"><rect x=".3" y=".3" width="5.4" height="5.4" fill="#f3f6fb" stroke="#7587a8" stroke-width=".6"/><circle cx="5" cy="5" r="1.8" fill="#6b86bb" stroke="#4a5f8a" stroke-width=".4"/></svg>
<svg style="left:598.5px;top:374.8px" width="6" height="6" viewBox="0 0 6 6"><path d="M0 .4H3.4M1.4 2H5M1.4 3.6H5M2.6 5.2H5.6" stroke="#9aa9c4" stroke-width=".8"/></svg>
<svg style="left:608.5px;top:374.8px" width="6" height="6" viewBox="0 0 6 6"><path d="M0 .4H5.6M0 2H5.6M0 3.6H5.6M0 5.2H5.6" stroke="#9aa9c4" stroke-width=".9"/></svg>
<span class="t" style="left:621.3px;top:374.01px;font-size:6.6px;color:#223a66;transform:scaleX(0.889);">100%</span>
<div class="abs " style="left:650px;top:377px;width:58px;height:1px;background:#8ea8cf;box-shadow:0 1px 0 #c6d8f0;"></div>
<svg style="left:641.8px;top:373.3px" width="8" height="8" viewBox="0 0 8 8"><circle cx="4" cy="4" r="4" fill="#eef3fb" stroke="#8ea3c6" stroke-width=".7"/><rect x="2.2" y="3.5" width="3.6" height="1" fill="#4a5f86"/></svg>
<svg style="left:708.5px;top:373.3px" width="8" height="8" viewBox="0 0 8 8"><circle cx="4" cy="4" r="4" fill="#eef3fb" stroke="#8ea3c6" stroke-width=".7"/><rect x="2.2" y="3.5" width="3.6" height="1" fill="#4a5f86"/><rect x="3.5" y="2.2" width="1" height="3.6" fill="#4a5f86"/></svg>
<svg style="left:677px;top:373.5px" width="4" height="7" viewBox="0 0 4 7"><path d="M.3 .3H3.7V4.6L2 6.6L.3 4.6Z" fill="#e8eff9" stroke="#6f86ab" stroke-width=".6"/></svg>
<div class="abs " style="left:33.5px;top:384px;width:33.0px;height:22px;background:linear-gradient(#6a6d72,#2e3033);border:1px solid #6a6d72;border-bottom:0;border-radius:2px 2px 0 0;"></div>
<div class="abs " style="left:138px;top:384px;width:34.5px;height:22px;background:linear-gradient(#4c4f54,#232426);border:1px solid #55585d;border-bottom:0;border-radius:2px 2px 0 0;"></div>
<div class="abs " style="left:173px;top:384px;width:34px;height:22px;background:linear-gradient(#4a4d52,#232426);border:1px solid #55585d;border-bottom:0;border-radius:2px 2px 0 0;"></div>
<div class="abs " style="left:208px;top:384px;width:33px;height:22px;background:linear-gradient(#5c5f64,#2c2d30);border:1px solid #6a6d72;border-bottom:0;border-radius:2px 2px 0 0;"></div>
<div class="abs " style="left:243px;top:384px;width:33px;height:22px;background:linear-gradient(#a4a6aa,#5e6064);border:1px solid #b0b2b6;border-bottom:0;border-radius:2px 2px 0 0;"></div>
<svg style="left:4.5px;top:384px" width="21" height="21" viewBox="0 0 21 21"><defs><radialGradient id="so" cx=".5" cy=".4" r=".7"><stop offset="0" stop-color="#9fdcf6"/><stop offset=".5" stop-color="#3a8fd0"/><stop offset="1" stop-color="#163f78"/></radialGradient></defs>
<circle cx="10.5" cy="10.5" r="10.2" fill="url(#so)" stroke="#0c2440" stroke-width=".5"/>
<path d="M4.6 5.8Q7.2 4.6 9.8 5.8V10Q7.2 8.8 4.6 10Z" fill="#ea5a2e"/><path d="M10.8 5.8Q13.4 7 16.2 5.8V10Q13.4 11.2 10.8 10Z" fill="#84c84a"/>
<path d="M4.6 11Q7.2 9.8 9.8 11V15.4Q7.2 14.2 4.6 15.4Z" fill="#45a6e8"/><path d="M10.8 11Q13.4 12.2 16.2 11V15.4Q13.4 16.6 10.8 15.4Z" fill="#f9cc30"/></svg>
<svg style="left:41.5px;top:386px" width="17" height="17" viewBox="0 0 17 17"><circle cx="8.5" cy="8.5" r="8.3" fill="#dd4b39"/>
<path d="M8.5 8.5L1.3 4.4A8.3 8.3 0 0 0 8.2 16.8L12 10.5Z" fill="#2fa04f"/>
<path d="M8.5 8.5L12 10.6L8.2 16.8A8.3 8.3 0 0 0 15.7 4.4H8.5Z" fill="#f7cd2c"/>
<circle cx="8.5" cy="8.5" r="3.9" fill="#f4f4f4"/><circle cx="8.5" cy="8.5" r="3" fill="#4a8af4"/></svg>
<svg style="left:76px;top:385.5px" width="18" height="18" viewBox="0 0 18 18"><circle cx="9" cy="9" r="8.6" fill="#e8641a"/><circle cx="9.8" cy="8" r="5.6" fill="#3a6fd0"/>
<path d="M1 6Q2.4 2.4 6 1.4Q4 3.6 5 5.6Q6.6 5 8 6Q6.4 7.4 7 9Q8 11 11 11Q14.6 10.4 15.6 6.4Q18.4 12 14 15.8Q9 19.2 4 16Q-.6 12 1 6Z" fill="#f08a1c"/>
<path d="M2 7Q3 4 5 3.4Q4.4 5 5 6Z" fill="#f7c23a"/></svg>
<svg style="left:111px;top:387.5px" width="18" height="15.5" viewBox="0 0 18 15.5"><path d="M.5 3V.8H6.5L8 2.4H17.5V14H.5Z" fill="#ecd88c" stroke="#bfa85a" stroke-width=".5"/>
<rect x="1.6" y="3.6" width="14.8" height="5" fill="#faf3d2"/><path d="M.5 6H17.5V14.6H.5Z" fill="#f3e3a0" stroke="#bfa85a" stroke-width=".4"/>
<path d="M2.6 11.4H15.4V15H2.6Z" fill="#6fbce8"/><rect x="4.5" y="9.6" width="9" height="2.6" rx=".8" fill="#a5d8f2"/></svg>
<svg style="left:146px;top:386.5px" width="17.5" height="16.5" viewBox="0 0 17.5 16.5"><path d="M3 2L17 .4V15L3 16Z" fill="#dcefd0" stroke="#86b26f" stroke-width=".5"/>
<path d="M3 5.4L17 4.4M3 9L17 8.4M3 12.6L17 12.4M7.6 1.6V15.6M12.4 1V15.4" stroke="#8dbb78" stroke-width=".7"/>
<path d="M.4 4.2L8.6 3.4V13L.4 12.4Z" fill="#cfe8c0" stroke="#5f9a4c" stroke-width=".5"/>
<text x="1.4" y="11.2" font-size="8.4" font-weight="bold" fill="#1f7a2e">X</text></svg>
<svg style="left:181.5px;top:386.5px" width="15.5" height="17" viewBox="0 0 15.5 17"><path d="M5 .6L15 2.6L10.6 16.4L.6 13.6Z" fill="#7ec8d8" stroke="#4a8ea0" stroke-width=".5"/><path d="M5 .6L15 2.6L14 5.4L4.2 3.2Z" fill="#c9eaf0"/><path d="M3.4 6L13 8.4M2.6 9L12 11.4" stroke="#d8f0f4" stroke-width=".7"/></svg>
<svg style="left:215px;top:385.5px" width="18.5" height="18" viewBox="0 0 18.5 18"><rect x="0" y="0" width="18.5" height="18" rx="1" fill="#3c4f9a"/><rect x="4" y="0" width="10.5" height="18" fill="#9fd0ea"/>
<rect x="4" y="7" width="10.5" height="1.6" fill="#3c4f9a"/><rect x="4.8" y="9.4" width="9" height="7.4" fill="#6fb4dc"/><rect x="4.8" y="1" width="9" height="5.4" fill="#b9def0"/>
<g fill="#c9d2ee"><rect x="1" y="1.4" width="2" height="2"/><rect x="1" y="5.4" width="2" height="2"/><rect x="1" y="9.4" width="2" height="2"/><rect x="1" y="13.4" width="2" height="2"/><rect x="15.5" y="1.4" width="2" height="2"/><rect x="15.5" y="5.4" width="2" height="2"/><rect x="15.5" y="9.4" width="2" height="2"/><rect x="15.5" y="13.4" width="2" height="2"/></g></svg>
<svg style="left:250px;top:386.5px" width="17" height="16.5" viewBox="0 0 17 16.5"><path d="M4 1.4L16.6 0V15.4L4 16.4Z" fill="#f4f7fc" stroke="#8aa0c8" stroke-width=".5"/>
<path d="M10 4H15.4M10 6.4H15.4M10 8.8H15.4M10 11.2H15.4M6 13.4H15.4" stroke="#6f8fcf" stroke-width=".8"/>
<path d="M.4 3.4L9.2 2.4V13.6L.4 12.8Z" fill="#2f5fb8" stroke="#1d4a94" stroke-width=".4"/>
<text x="1.2" y="11" font-size="7.6" font-weight="bold" fill="#eef3ff">W</text></svg>
<svg style="left:633.5px;top:393px" width="4.6" height="3" viewBox="0 0 4.6 3"><path d="M0 3L2.3 0L4.6 3Z" fill="#f0f0f0"/></svg>
<svg style="left:645.5px;top:390.5px" width="9" height="9" viewBox="0 0 9 9"><rect x="2.6" y="2.4" width="6" height="4.6" fill="#20242a" stroke="#f0f0f0" stroke-width="1"/><rect x="4.4" y="7.4" width="2.6" height="1.2" fill="#f0f0f0"/><path d="M0 .8H3.4V3" fill="none" stroke="#f0f0f0" stroke-width="1"/></svg>
<svg style="left:659px;top:391px" width="8" height="8" viewBox="0 0 8 8"><path d="M0 2.6H1.8L4.2 .4V7.6L1.8 5.4H0Z" fill="#f4f4f4"/><path d="M5.2 2.2Q6.4 4 5.2 5.8M6.4 1Q8.4 4 6.4 7" fill="none" stroke="#e0e0e0" stroke-width=".7"/></svg>
<span class="t" style="left:679.7px;top:387.14px;font-size:7.4px;color:#f4f4f4;transform:scaleX(0.871);">2:22 PM</span>
<span class="t" style="left:677px;top:396.74px;font-size:7.4px;color:#f4f4f4;transform:scaleX(0.881);">5/18/2013</span>
<div class="abs " style="left:712.5px;top:384px;width:7.5px;height:22px;background:linear-gradient(90deg,#1a1b1d,#55585d 40%,#2a2b2e);border-left:1px solid #6a6d72;"></div>
</div>
</body>
</html>
